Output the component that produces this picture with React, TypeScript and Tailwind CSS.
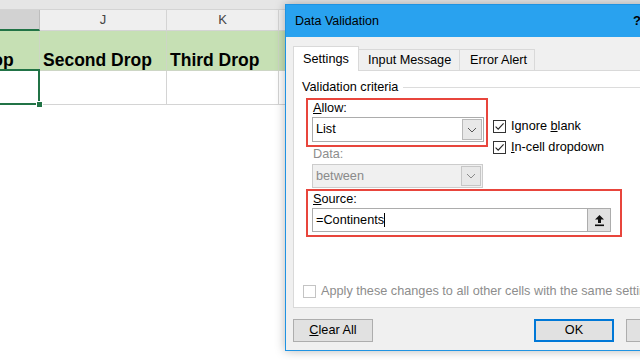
import React from "react";

function Check({ checked, disabled }: { checked?: boolean; disabled?: boolean }) {
  return (
    <div
      className={
        disabled
          ? "w-[13px] h-[13px] shrink-0 border border-[#c4c4c4] bg-white"
          : "w-[13px] h-[13px] shrink-0 border border-[#333333] bg-white flex items-center justify-center"
      }
    >
      {checked && (
        <svg width="11" height="11" viewBox="0 0 11 11">
          <path d="M1.6 5.6 L4.2 8.2 L9.6 2.4" fill="none" stroke="#222" strokeWidth="1.1" />
        </svg>
      )}
    </div>
  );
}

function Chevron({ color }: { color: string }) {
  return (
    <svg width="10" height="6" viewBox="0 0 10 6">
      <path d="M1 1 L5 5 L9 1" fill="none" stroke={color} strokeWidth="1" />
    </svg>
  );
}

export default function App() {
  return (
    <div className="relative w-[640px] h-[360px] overflow-hidden bg-white font-['Liberation_Sans',Arial,sans-serif] text-black">
      {/* Spreadsheet */}
      <div className="flex flex-col">
        <div className="h-[10px] bg-[#e6e6e6] border-b border-[#d4d4d4]" />
        <div className="flex h-[21px] text-[13px] text-[#444]">
          <div className="w-[40px] shrink-0 bg-[#d2d2d2] border-r border-[#bdbdbd] border-b-2 border-b-[#217346]" />
          <div className="w-[127px] shrink-0 bg-[#efefef] border-r border-b border-[#d4d4d4] flex items-center justify-center">J</div>
          <div className="w-[112px] shrink-0 bg-[#efefef] border-r border-b border-[#d4d4d4] flex items-center justify-center">K</div>
          <div className="flex-1 bg-[#efefef] border-b border-[#d4d4d4]" />
        </div>
        <div className="flex h-[40px] text-[17.5px] leading-[20px] font-bold">
          <div className="w-[40px] shrink-0 bg-[#c6e0b4] border-r border-b border-[#cdd6c5] overflow-hidden flex items-end">
            <span className="whitespace-nowrap ml-[-70px]">First Drop</span>
          </div>
          <div className="w-[127px] shrink-0 bg-[#c6e0b4] border-r border-b border-[#cdd6c5] flex items-end pl-[3px] whitespace-nowrap">Second Drop</div>
          <div className="w-[112px] shrink-0 bg-[#c6e0b4] border-r border-b border-[#cdd6c5] flex items-end pl-[3px] whitespace-nowrap">Third Drop</div>
          <div className="flex-1 bg-[#c6e0b4] border-b border-[#cdd6c5]" />
        </div>
        <div className="flex h-[34px]">
          <div className="relative w-[40px] shrink-0 border-r border-b border-[#d4d4d4]">
            <div className="absolute left-[-2px] top-[-2px] right-[-1px] bottom-[-1px] border-2 border-[#217346]" />
            <div className="absolute right-[-4px] bottom-[-4px] w-[7px] h-[7px] bg-[#217346] border border-white" />
          </div>
          <div className="w-[127px] shrink-0 border-r border-b border-[#d4d4d4]" />
          <div className="w-[112px] shrink-0 border-r border-b border-[#d4d4d4]" />
          <div className="flex-1 border-b border-[#d4d4d4]" />
        </div>
      </div>

      {/* Dialog window */}
      <div className="absolute left-[285px] top-[4px] w-[430px] h-[347px] border border-[#1f93e2] bg-[#f0f0f0] shadow-[0_0_10px_rgba(0,0,0,0.28)] flex flex-col text-[12.7px]">
        <div className="h-[32px] bg-[#29a2ef] flex items-center pl-[9px] text-[12.5px]">
          <span>Data Validation</span>
          <div className="ml-auto flex items-center gap-[46px] pr-[16px] text-[13px]">
            <span className="font-bold">?</span>
            <span>✕</span>
          </div>
        </div>
        <div className="flex flex-col px-[7px] pt-[9px]">
          {/* Tabs */}
          <div className="flex items-end h-[24px] leading-[15px]">
            <div className="relative z-10 w-[66px] h-[25px] mb-[-1px] bg-white border border-b-0 border-[#d9d9d9] pl-[9px] pt-[5px]">
              Settings
            </div>
            <div className="w-[101px] h-[21px] border-t border-r border-[#d9d9d9] pl-[9px] pt-[3px] whitespace-nowrap">
              Input Message
            </div>
            <div className="w-[75px] h-[21px] border-t border-r border-[#d9d9d9] pl-[10px] pt-[3px] whitespace-nowrap">
              Error Alert
            </div>
          </div>

          {/* Panel */}
          <div className="h-[238px] bg-white border border-[#d9d9d9] pl-[8px] pt-[9px] leading-[15px] flex flex-col">
            <div className="flex items-center h-[15px]">
              <span className="whitespace-nowrap">Validation criteria</span>
              <div className="flex-1 h-px bg-[#dcdcdc] ml-[5px] mr-[8px]" />
            </div>

            <div className="flex items-start h-[49px] mt-[3px] ml-[4px]">
              <div className="w-[182px] h-[49px] border-2 border-[#e8453c] pl-[4px] pt-[1px] flex flex-col">
                <div className="pl-[1px]">
                  <span className="underline">A</span>llow:
                </div>
                <div className="mt-[1px] w-[172px] h-[25px] border border-[#acacac] bg-white flex items-center">
                  <span className="pl-[3px]">List</span>
                  <div className="ml-auto mr-px w-[20px] h-[21px] bg-[#e8e8e8] border border-[#b9b9b9] flex items-center justify-center">
                    <Chevron color="#555" />
                  </div>
                </div>
              </div>
              <div className="ml-[5px] mt-[22px] flex flex-col gap-[8px]">
                <div className="flex items-center h-[13px] gap-[5px] whitespace-nowrap">
                  <Check checked />
                  <span>
                    Ignore <span className="underline">b</span>lank
                  </span>
                </div>
                <div className="flex items-center h-[13px] gap-[5px] whitespace-nowrap">
                  <Check checked />
                  <span>
                    <span className="underline">I</span>n-cell dropdown
                  </span>
                </div>
              </div>
            </div>

            <div className="ml-[11px] text-[#8d8d8d]">Data:</div>
            <div className="mt-[2px] ml-[10px] w-[171px] h-[24px] border border-[#cccccc] bg-[#f0f0f0] flex items-center text-[#8a8a8a]">
              <span className="pl-[3px]">between</span>
              <div className="ml-auto mr-px w-[20px] h-[20px] bg-[#e8e8e8] border border-[#c6c6c6] flex items-center justify-center">
                <Chevron color="#8a8a8a" />
              </div>
            </div>

            <div className="mt-[1px] ml-[4px] w-[316px] h-[48px] border-2 border-[#e8453c] pl-[4px] pt-[1px] flex flex-col">
              <div className="pl-[1px]">
                <span className="underline">S</span>ource:
              </div>
              <div className="mt-[1px] w-[299px] h-[24px] border border-[#acacac] bg-white flex items-center">
                <span className="pl-[3px]">=Continents</span>
                <span className="w-px h-[14px] bg-black" />
                <div className="ml-auto w-[23px] h-full bg-[#e1e1e1] border-l border-[#adadad] flex items-center justify-center">
                  <svg width="11" height="13" viewBox="0 0 11 13">
                    <polygon points="5.5,1 10,5.6 7,5.6 7,9 4,9 4,5.6 1,5.6" fill="#111" />
                    <rect x="1" y="10.5" width="9" height="1.6" fill="#111" />
                  </svg>
                </div>
              </div>
            </div>

            <div className="mt-[47px] ml-[1px] flex items-center gap-[5px] whitespace-nowrap text-[#8d8d8d]">
              <Check disabled />
              <span>Apply these changes to all other cells with the same settings</span>
            </div>
          </div>

          {/* Buttons */}
          <div className="mt-[11px] flex h-[23px] leading-[15px]">
            <div className="w-[80px] h-[23px] bg-[#e1e1e1] border border-[#adadad] flex items-center justify-center">
              <span>
                <span className="underline">C</span>lear All
              </span>
            </div>
            <div className="ml-[161px] w-[80px] h-[23px] bg-[#e1e1e1] border-2 border-[#0078d7] flex items-center justify-center">
              OK
            </div>
            <div className="ml-[12px] w-[80px] h-[23px] bg-[#e1e1e1] border border-[#adadad] flex items-center justify-center">
              Cancel
            </div>
          </div>
        </div>
      </div>
    </div>
  );
}
